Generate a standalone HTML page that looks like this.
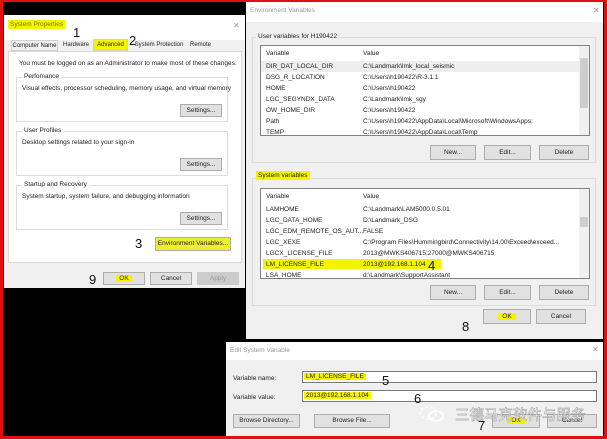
<!DOCTYPE html>
<html><head><meta charset="utf-8"><style>
*{margin:0;padding:0;box-sizing:border-box}
body{width:607px;height:439px;position:relative;background:#000;overflow:hidden;font-family:"Liberation Sans",sans-serif;font-size:6.5px;color:#222}
.a{position:absolute;white-space:nowrap}
.frame{position:absolute;left:0;top:0;width:607px;height:439px;border:3px solid #e01010;border-top-width:2px;pointer-events:none;z-index:10}
.dlg{position:absolute;background:#fff}
.btn{position:absolute;background:#e1e1e1;border:1px solid #adadad;text-align:center;font-size:6.5px;line-height:12px;color:#222}
.grp{position:absolute;border:1px solid #dcdcdc}
.hl{background:#f4f400}
.num{position:absolute;font-size:13px;color:#111;line-height:13px}
.list{position:absolute;border:1px solid #828282;background:#fff}
.sb{position:absolute;right:0;top:0;bottom:0;width:10px;background:#f0f0f0}
.inp{position:absolute;border:1px solid #7a7a7a;background:#fff}
.t{color:#999;font-size:6.5px}
.tab{position:absolute;white-space:nowrap;font-size:6px;top:25px;height:11px;line-height:10px;text-align:center}
</style></head><body>

<!-- System Properties -->
<div class="dlg" style="left:4px;top:15px;width:241px;height:273px;background:#f0f0f0">
 <div style="position:absolute;left:0;top:0;width:241px;height:25px;background:#fff"></div>
 <div class="a hl" style="left:4px;top:5px;font-size:6.5px;padding:1px 2px;color:#7a7a00">System Properties</div>
 <div class="a" style="left:229px;top:6px;color:#999;font-size:8px">✕</div>
 <div class="num" style="left:69px;top:11px">1</div>
 <div class="tab" style="left:7px;width:47px;border:1px solid #d0d0d0">Computer Name</div>
 <div class="tab" style="left:56px;width:32px">Hardware</div>
 <div class="tab hl" style="left:89px;width:35px;top:24px;height:12px;border:1px solid #d0d0d0;line-height:11px">Advanced</div>
 <div class="num" style="left:125px;top:19px">2</div>
 <div class="tab" style="left:128px;width:54px">System Protection</div>
 <div class="tab" style="left:183px;width:27px">Remote</div>
 <div style="position:absolute;left:4px;top:36px;width:234px;height:212px;background:#fff;border:1px solid #d9d9d9"></div>
 <div class="a" style="left:15px;top:45px">You must be logged on as an Administrator to make most of these changes.</div>
 <div class="grp" style="left:12px;top:62px;width:212px;height:45px"></div>
 <div class="a" style="left:18px;top:58px;background:#fff;padding:0 2px">Perfomance</div>
 <div class="a" style="left:18px;top:70px">Visual effects, processor scheduling, memory usage, and virtual memory</div>
 <div class="btn" style="left:176px;top:89px;width:42px;height:13px">Settings...</div>
 <div class="grp" style="left:12px;top:116px;width:212px;height:45px"></div>
 <div class="a" style="left:18px;top:112px;background:#fff;padding:0 2px">User Profiles</div>
 <div class="a" style="left:18px;top:124px">Desktop settings related to your sign-in</div>
 <div class="btn" style="left:176px;top:143px;width:42px;height:13px">Settings...</div>
 <div class="grp" style="left:12px;top:170px;width:212px;height:45px"></div>
 <div class="a" style="left:18px;top:166px;background:#fff;padding:0 2px">Startup and Recovery</div>
 <div class="a" style="left:18px;top:178px">System startup, system failure, and debugging information</div>
 <div class="btn" style="left:176px;top:197px;width:42px;height:13px">Settings...</div>
 <div class="num" style="left:131px;top:222px">3</div>
 <div class="btn" style="left:151px;top:222px;width:76px;height:14px;background:#eeee30">Environment Variables...</div>
 <div class="num" style="left:85px;top:258px">9</div>
 <div class="btn" style="left:99px;top:257px;width:42px;height:13px"><span class="hl" style="padding:0 3px">OK</span></div>
 <div class="btn" style="left:146px;top:257px;width:42px;height:13px">Cancel</div>
 <div class="btn" style="left:193px;top:257px;width:42px;height:13px;color:#999;background:#ccc;border-color:#ccc">Apply</div>
</div>

<!-- Environment Variables -->
<div class="dlg" style="left:246px;top:2px;width:357px;height:337px;background:#f0f0f0">
 <div style="position:absolute;left:0;top:0;width:357px;height:20px;background:#fff"></div>
 <div class="a t" style="left:4px;top:5px">Environment Variables</div>
 <div class="a" style="left:347px;top:4px;color:#999;font-size:8px">✕</div>
 <div class="grp" style="left:6px;top:35px;width:344px;height:126px;border-color:#dcdcdc"></div>
 <div class="a" style="left:10px;top:31px;background:#f0f0f0;padding:0 2px">User variables for H190422</div>
 <div class="list" style="left:14px;top:43px;width:330px;height:91px">
  <div class="sb"><div style="position:absolute;left:1px;top:12px;width:8px;height:50px;background:#cdcdcd"></div></div>
  <div class="a" style="left:5px;top:4px">Variable</div><div class="a" style="left:102px;top:4px">Value</div>
  <div style="position:absolute;left:0;top:15px;width:319px;height:11px;background:#eee"></div>
  <div class="a" style="left:5px;top:17px">DIR_DAT_LOCAL_DIR</div><div class="a" style="left:102px;top:17px">C:\Landmark\lmk_local_seismic</div>
  <div class="a" style="left:5px;top:28px">DSG_R_LOCATION</div><div class="a" style="left:102px;top:28px">C:\Users\h190422\R-3.1.1</div>
  <div class="a" style="left:5px;top:39px">HOME</div><div class="a" style="left:102px;top:39px">C:\Users\h190422</div>
  <div class="a" style="left:5px;top:50px">LGC_SEGYNDX_DATA</div><div class="a" style="left:102px;top:50px">C:\Landmark\lmk_sgy</div>
  <div class="a" style="left:5px;top:61px">OW_HOME_DIR</div><div class="a" style="left:102px;top:61px">C:\Users\h190422</div>
  <div class="a" style="left:5px;top:72px">Path</div><div class="a" style="left:102px;top:72px">C:\Users\h190422\AppData\Local\Microsoft\WindowsApps;</div>
  <div class="a" style="left:5px;top:83px">TEMP</div><div class="a" style="left:102px;top:83px">C:\Users\h190422\AppData\Local\Temp</div>
 </div>
 <div class="btn" style="left:184px;top:143px;width:46px;height:15px;line-height:13px">New...</div>
 <div class="btn" style="left:238px;top:143px;width:47px;height:15px;line-height:13px">Edit...</div>
 <div class="btn" style="left:293px;top:143px;width:50px;height:15px;line-height:13px">Delete</div>
 <div class="grp" style="left:6px;top:176px;width:344px;height:128px;border-color:#dcdcdc"></div>
 <div class="a hl" style="left:10px;top:169px;padding:1px 2px">System variables</div>
 <div class="list" style="left:14px;top:186px;width:330px;height:91px">
  <div class="sb"><div style="position:absolute;left:1px;top:28px;width:8px;height:10px;background:#cdcdcd"></div></div>
  <div class="a" style="left:5px;top:4px">Variable</div><div class="a" style="left:102px;top:4px">Value</div>
  <div class="a" style="left:5px;top:17px">LAMHOME</div><div class="a" style="left:102px;top:17px">C:\Landmark\LAM5000.0.5.01</div>
  <div class="a" style="left:5px;top:28px">LGC_DATA_HOME</div><div class="a" style="left:102px;top:28px">D:\Landmark_DSG</div>
  <div class="a" style="left:5px;top:39px">LGC_EDM_REMOTE_OS_AUT...</div><div class="a" style="left:102px;top:39px">FALSE</div>
  <div class="a" style="left:5px;top:50px">LGC_XEXE</div><div class="a" style="left:102px;top:50px">C:\Program Files\Hummingbird\Connectivity\14.00\Exceed\exceed...</div>
  <div class="a" style="left:5px;top:61px">LGCX_LICENSE_FILE</div><div class="a" style="left:102px;top:61px">2013@MWKS406715;27000@MWKS406715</div>
  <div style="position:absolute;left:2px;top:70px;width:178px;height:10px;background:#f4f400"></div>
  <div class="a" style="left:5px;top:72px">LM_LICENSE_FILE</div><div class="a" style="left:102px;top:72px">2013@192.168.1.104</div>
  <div class="a" style="left:5px;top:83px">LSA_HOME</div><div class="a" style="left:102px;top:83px">d:\Landmark\SupportAssistant</div>
 </div>
 <div class="num" style="left:182px;top:257px">4</div>
 <div class="btn" style="left:184px;top:283px;width:46px;height:15px;line-height:13px">New...</div>
 <div class="btn" style="left:238px;top:283px;width:47px;height:15px;line-height:13px">Edit...</div>
 <div class="btn" style="left:293px;top:283px;width:50px;height:15px;line-height:13px">Delete</div>
 <div class="num" style="left:216px;top:318px">8</div>
 <div class="btn" style="left:237px;top:307px;width:48px;height:15px;line-height:13px"><span class="hl" style="padding:0 4px">OK</span></div>
 <div class="btn" style="left:290px;top:307px;width:50px;height:15px;line-height:13px">Cancel</div>
</div>

<!-- Edit System Variable -->
<div class="dlg" style="left:226px;top:342px;width:377px;height:94px;background:#f0f0f0">
 <div style="position:absolute;left:0;top:0;width:377px;height:18px;background:#fff"></div>
 <div class="a t" style="left:4px;top:5px">Edit System Variable</div>
 <div class="a" style="left:366px;top:3px;color:#999;font-size:8px">✕</div>
 <div class="a" style="left:7px;top:33px">Variable name:</div>
 <div class="inp" style="left:76px;top:29px;width:295px;height:12px"></div>
 <div class="a hl" style="left:78px;top:31px;padding:0 2px">LM_LICENSE_FILE</div>
 <div class="num" style="left:156px;top:32px">5</div>
 <div class="a" style="left:7px;top:52px">Variable value:</div>
 <div class="inp" style="left:76px;top:48px;width:295px;height:12px"></div>
 <div class="a hl" style="left:78px;top:50px;padding:0 2px">2013@192.168.1.104</div>
 <div class="num" style="left:188px;top:50px">6</div>
 <div class="btn" style="left:7px;top:72px;width:67px;height:14px">Browse Directory...</div>
 <div class="btn" style="left:88px;top:72px;width:76px;height:14px">Browse File...</div>
 <div class="btn" style="left:266px;top:72px;width:48px;height:14px"><span class="hl" style="padding:0 4px">OK</span></div>
 <div class="btn" style="left:321px;top:72px;width:50px;height:14px">Cancel</div>
 <div class="num" style="left:252px;top:77px">7</div>
 <svg style="position:absolute;left:192px;top:62px" width="28" height="20"><ellipse cx="10" cy="9" rx="8" ry="6" fill="none" stroke="#fff" stroke-width="1.5" stroke-dasharray="3 2"/><ellipse cx="18" cy="12" rx="7" ry="5" fill="none" stroke="#fff" stroke-width="1.5"/></svg>
 <div class="a" style="left:229px;top:62px;font-family:'Liberation Sans','Noto Sans CJK SC',sans-serif;font-size:14.5px;color:rgba(255,255,255,0.9);-webkit-text-stroke:0.4px #888">三德马克软件与服务</div>
</div>

<div class="frame"></div>
</body></html>
